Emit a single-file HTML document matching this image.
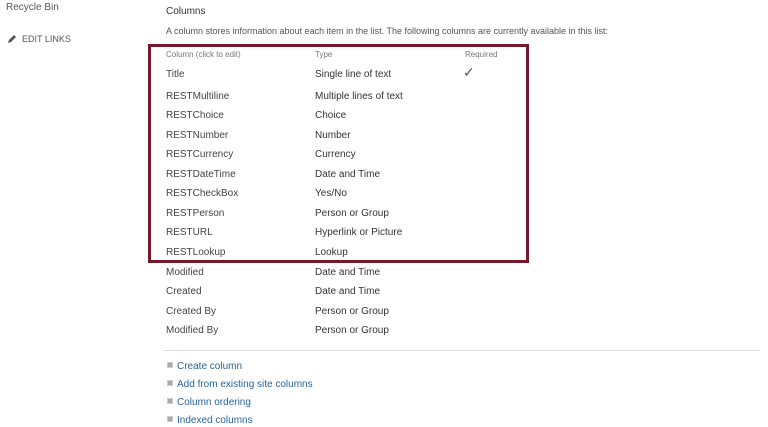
<html><head><style>
body{margin:0;width:768px;height:418px;overflow:hidden;background:#fff;font-family:"Liberation Sans",sans-serif;color:#444;position:relative}
.a{position:absolute;white-space:nowrap;font-size:10px;line-height:12px}
.h{color:#777;font-size:8px}
.l{color:#2a6496}
.b{position:absolute;width:4px;height:4px;background:#aaa;border:1px solid #ccc}
</style></head><body>
<div class="a" style="left:6px;top:2px;color:#555">Recycle Bin</div>
<div class="a" style="left:22px;top:33px;color:#555;font-size:9px">EDIT LINKS</div>
<svg style="position:absolute;left:7px;top:34px" width="10" height="10"><path d="M1 9 L2 6 L7 1 L9 3 L4 8 Z" fill="#555"/></svg>
<div class="a" style="left:166px;top:6px;color:#333">Columns</div>
<div class="a" style="left:166px;top:25px;font-size:9px;color:#555">A column stores information about each item in the list. The following columns are currently available in this list:</div>
<div style="position:absolute;left:148px;top:44px;width:375px;height:213px;border:3px solid #74182a"></div>
<div class="a h" style="left:166px;top:49px">Column (click to edit)</div>
<div class="a h" style="left:315px;top:49px">Type</div>
<div class="a h" style="left:465px;top:49px">Required</div>
<div class="a" style="left:463px;top:66px;font-size:14px;color:#555">✓</div>
<div class="a" style="left:166px;top:69px">Title</div><div class="a" style="left:315px;top:69px;color:#333">Single line of text</div>
<div class="a" style="left:166px;top:91px">RESTMultiline</div><div class="a" style="left:315px;top:91px;color:#333">Multiple lines of text</div>
<div class="a" style="left:166px;top:110px">RESTChoice</div><div class="a" style="left:315px;top:110px;color:#333">Choice</div>
<div class="a" style="left:166px;top:130px">RESTNumber</div><div class="a" style="left:315px;top:130px;color:#333">Number</div>
<div class="a" style="left:166px;top:149px">RESTCurrency</div><div class="a" style="left:315px;top:149px;color:#333">Currency</div>
<div class="a" style="left:166px;top:169px">RESTDateTime</div><div class="a" style="left:315px;top:169px;color:#333">Date and Time</div>
<div class="a" style="left:166px;top:188px">RESTCheckBox</div><div class="a" style="left:315px;top:188px;color:#333">Yes/No</div>
<div class="a" style="left:166px;top:208px">RESTPerson</div><div class="a" style="left:315px;top:208px;color:#333">Person or Group</div>
<div class="a" style="left:166px;top:227px">RESTURL</div><div class="a" style="left:315px;top:227px;color:#333">Hyperlink or Picture</div>
<div class="a" style="left:166px;top:247px">RESTLookup</div><div class="a" style="left:315px;top:247px;color:#333">Lookup</div>
<div class="a" style="left:166px;top:267px">Modified</div><div class="a" style="left:315px;top:267px;color:#333">Date and Time</div>
<div class="a" style="left:166px;top:286px">Created</div><div class="a" style="left:315px;top:286px;color:#333">Date and Time</div>
<div class="a" style="left:166px;top:306px">Created By</div><div class="a" style="left:315px;top:306px;color:#333">Person or Group</div>
<div class="a" style="left:166px;top:325px">Modified By</div><div class="a" style="left:315px;top:325px;color:#333">Person or Group</div>
<div style="position:absolute;left:163px;top:350px;width:597px;height:1px;background:#ddd"></div>
<div class="b" style="left:167px;top:362px"></div><div class="a l" style="left:177px;top:361px">Create column</div>
<div class="b" style="left:167px;top:380px"></div><div class="a l" style="left:177px;top:379px">Add from existing site columns</div>
<div class="b" style="left:167px;top:398px"></div><div class="a l" style="left:177px;top:397px">Column ordering</div>
<div class="b" style="left:167px;top:416px"></div><div class="a l" style="left:177px;top:415px">Indexed columns</div>
</body></html>
